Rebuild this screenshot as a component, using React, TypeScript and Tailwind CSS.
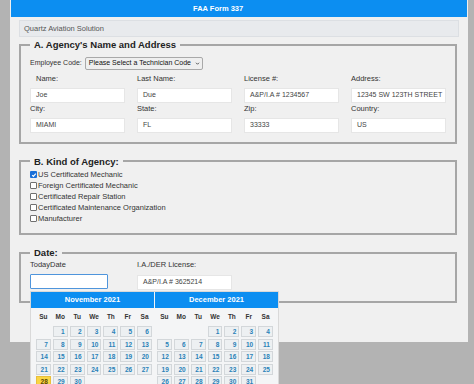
import React from 'react';

type Cell = number | null;

function buildMonth(startDay: number, days: number): Cell[] {
  const cells: Cell[] = [];
  for (let i = 0; i < startDay; i++) cells.push(null);
  for (let d = 1; d <= days; d++) cells.push(d);
  return cells;
}

const DAY_NAMES = ['Su', 'Mo', 'Tu', 'We', 'Th', 'Fr', 'Sa'];

function Field({ label, value, indent }: { label: string; value: string; indent?: boolean }) {
  return (
    <div>
      <div className={indent ? 'h-[10px] leading-[10px] pl-[6px]' : 'h-[10px] leading-[10px]'}>{label}</div>
      <div className="mt-[4px] h-[15px] bg-white border border-[#e6e6e6] pl-[5px] flex items-center text-[7px] text-[#444] whitespace-nowrap overflow-hidden">
        {value}
      </div>
    </div>
  );
}

function Check({ label, checked }: { label: string; checked?: boolean }) {
  return (
    <div className="h-[11px] flex items-center gap-[1px]">
      {checked ? (
        <span className="w-[7px] h-[7px] rounded-[1px] bg-[#1a6fd8] flex items-center justify-center">
          <svg viewBox="0 0 10 10" className="w-[6px] h-[6px]" fill="none" stroke="white" strokeWidth={2}>
            <path d="M2 5.2l2 2 4-4.4" />
          </svg>
        </span>
      ) : (
        <span className="w-[7px] h-[7px] rounded-[1px] bg-white border border-[#707070]" />
      )}
      <span>{label}</span>
    </div>
  );
}

function Month({ title, cells, today, pad }: { title: string; cells: Cell[]; today?: number; pad: 'l5' | 'l2' }) {
  return (
    <div className="flex-1">
      <div className="h-[16px] bg-[#0c8ef1] text-white font-bold text-[7.5px] flex items-center justify-center">
        {title}
      </div>
      <div className={pad === 'l5' ? 'pl-[5px]' : 'pl-[2px]'}>
        <div className="mt-[4px] w-[116px] grid grid-cols-7 gap-x-[2px] h-[10px] items-center text-center font-bold text-[6.5px] text-[#333]">
          {DAY_NAMES.map((d) => (
            <span key={d}>{d}</span>
          ))}
        </div>
        <div className="mt-[4px] w-[116px] grid grid-cols-7 gap-x-[2px] gap-y-[1.5px] auto-rows-[11px]">
          {cells.map((d, i) =>
            d === null ? (
              <span key={i} />
            ) : d === today ? (
              <span
                key={i}
                className="border border-[#e9bf3c] bg-[#f9d545] text-right pr-[2px] text-[6.5px] font-bold leading-[9px] text-[#5a4500]"
              >
                {d}
              </span>
            ) : (
              <span
                key={i}
                className="border border-[#d3d7da] bg-[#edf0f2] text-right pr-[2px] text-[6.5px] font-bold leading-[9px] text-[#2b82b8]"
              >
                {d}
              </span>
            )
          )}
        </div>
      </div>
    </div>
  );
}

export default function App() {
  const nov = buildMonth(1, 30);
  const dec = buildMonth(3, 31);

  return (
    <div className="w-[474px] h-[384px] overflow-hidden bg-[#b3b3b3] font-['Liberation_Sans',Arial,sans-serif] text-[7.5px] text-[#333]">
      <div className="ml-[10px] w-[458px] h-[342px] bg-[#f0f0f0]">
        {/* Header */}
        <div className="mx-[1px] h-[17px] bg-[#0c8ef1] flex items-center pl-[182px] text-white font-bold text-[7.5px]">
          FAA Form 337
        </div>

        <div className="px-[9px]">
          <div className="mt-[3px] h-[17px] bg-[#e8eaed] border border-[#dcdfe3] flex items-center pl-[4px] text-[#555]">
            Quartz Aviation Solution
          </div>

          {/* A. Agency */}
          <fieldset className="mt-[2px] mr-[2px] border-2 border-[#a6a6a6] pl-[9px] pb-[9px]">
            <legend className="px-[4px] text-[9.5px] leading-[11px] font-bold text-[#222]">
              A. Agency's Name and Address
            </legend>
            <div className="mt-[7px] h-[13px] flex items-center gap-[3px] text-[7px]">
              <span className="whitespace-nowrap">Employee Code:</span>
              <div className="w-[118px] h-[13px] border border-[#a9a9a9] rounded-[2px] bg-[#efefef] flex items-center pl-[3px] gap-[4px] text-[#111] whitespace-nowrap">
                <span>Please Select a Technician Code</span>
                <svg viewBox="0 0 10 10" className="w-[5px] h-[5px] shrink-0" fill="none" stroke="#333" strokeWidth={1.6}>
                  <path d="M2 3.5l3 3 3-3" />
                </svg>
              </div>
            </div>
            <div className="mt-[3.5px] grid grid-cols-[95px_95px_95px_95px] gap-x-[12px] gap-y-[1px]">
              <Field label="Name:" value="Joe" indent />
              <Field label="Last Name:" value="Due" />
              <Field label="License #:" value="A&P/I.A # 1234567" />
              <Field label="Address:" value="12345 SW 123TH STREET" />
              <Field label="City:" value="MIAMI" />
              <Field label="State:" value="FL" />
              <Field label="Zip:" value="33333" />
              <Field label="Country:" value="US" />
            </div>
          </fieldset>

          {/* B. Kind of Agency */}
          <fieldset className="mt-[12px] mr-[2px] border-2 border-[#a6a6a6] pl-[9px] pb-[9px]">
            <legend className="px-[4px] text-[9.5px] leading-[11px] font-bold text-[#222]">B. Kind of Agency:</legend>
            <div className="mt-[2.5px]">
              <Check label="US Certificated Mechanic" checked />
              <Check label="Foreign Certificated Mechanic" />
              <Check label="Certificated Repair Station" />
              <Check label="Certificated Maintenance Organization" />
              <Check label="Manufacturer" />
            </div>
          </fieldset>

          {/* Date */}
          <fieldset className="mt-[12px] mr-[2px] border-2 border-[#a6a6a6] pl-[9px] pb-[11px]">
            <legend className="px-[4px] text-[9.5px] leading-[11px] font-bold text-[#222]">Date:</legend>
            <div className="mt-[2px] flex">
              <div className="w-[107px] relative">
                <div className="h-[10px] leading-[10px]">TodayDate</div>
                <div className="mt-[3.5px] w-[78px] h-[15px] bg-white border-[1.5px] border-[#4f95dc] rounded-[1px]" />
                <div className="absolute left-0 top-[calc(100%+1px)] w-[249px] h-[120px] bg-[#f4f5f6] border border-[#d9d9d9] flex gap-[1px] z-10">
                  <Month title="November 2021" cells={nov} today={28} pad="l5" />
                  <Month title="December 2021" cells={dec} pad="l2" />
                </div>
              </div>
              <div className="w-[95px]">
                <div className="h-[10px] leading-[10px]">I.A./DER License:</div>
                <div className="mt-[5px] h-[15px] bg-white border border-[#e6e6e6] pl-[5px] flex items-center text-[7px] text-[#444] whitespace-nowrap">
                  A&amp;P/I.A # 3625214
                </div>
              </div>
            </div>
          </fieldset>
        </div>
      </div>
    </div>
  );
}
